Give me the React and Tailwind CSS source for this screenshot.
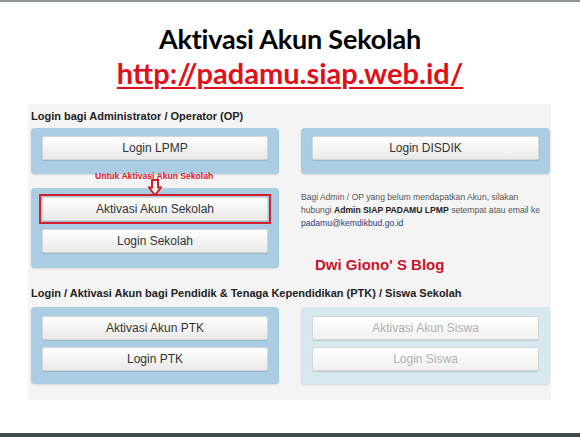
function Btn({ children, disabled }) {
  return (
    <div
      className={
        "h-[24px] flex items-center justify-center rounded-[2px] border border-[#d6d6d6] bg-gradient-to-b from-white to-[#e9e9e9] shadow-[0_1px_1px_rgba(0,0,0,0.12)] text-[12px] " +
        (disabled ? "text-[#b0b0b0] from-[#fafafa] to-[#f0f0f0]" : "text-[#333]")
      }
    >
      {children}
    </div>
  );
}

function Box({ children, light, className = "" }) {
  return (
    <div
      className={
        "rounded-[4px] px-[11px] shadow-[0_1px_2px_rgba(0,0,0,0.12)] " +
        (light ? "bg-[#d7e8f0] " : "bg-[#abcde3] ") +
        className
      }
    >
      {children}
    </div>
  );
}

export default function App() {
  return (
    <div
      className="w-[580px] h-[437px] bg-white border-t-2 border-[#8c9898] flex flex-col overflow-hidden"
      style={{ fontFamily: '"Liberation Sans", Arial, sans-serif' }}
    >
      <div className="flex flex-col items-center pt-[20px]">
        <h1 className="text-[27px] leading-[34px] font-bold text-black font-['Lato',sans-serif] tracking-[-0.2px]">
          Aktivasi Akun Sekolah
        </h1>
        <a
          href="#"
          className="text-[29px] leading-[34px] font-bold text-[#e0101a] underline decoration-[2px] underline-offset-[3px] font-['Lato',sans-serif]"
        >
          http://padamu.siap.web.id/
        </a>
      </div>

      <div className="ml-[28px] mt-[14px] w-[523px] h-[296px] bg-[#f4f4f4] px-[3px] flex flex-col">
        <div className="h-[24px] flex items-center text-[11px] font-bold text-[#222]">
          Login bagi Administrator / Operator (OP)
        </div>

        <div className="grid grid-cols-[248px_249px] gap-x-[22px]">
          <div className="flex flex-col">
            <Box className="pt-[8px] pb-[14px]">
              <Btn>Login LPMP</Btn>
            </Box>
            <div className="relative h-[14px]">
              <div className="absolute left-[64px] top-[-4px] text-[8.6px] font-bold text-[#d4202c] whitespace-nowrap">
                Untuk Aktivasi Akun Sekolah
              </div>
              <svg
                className="absolute left-[117px] top-[5px] z-10"
                width="14"
                height="17"
                viewBox="0 0 14 17"
              >
                <path
                  d="M4 1 H10 V8.5 H13 L7 16 L1 8.5 H4 Z"
                  fill="white"
                  stroke="#d4202c"
                  strokeWidth="2"
                />
              </svg>
            </div>
            <Box className="pt-[9px] pb-[15px] flex flex-col gap-[8px]">
              <div className="relative">
                <div className="absolute inset-[-3px_-3px] border-2 border-[#d4202c] pointer-events-none" />
                <Btn>Aktivasi Akun Sekolah</Btn>
              </div>
              <Btn>Login Sekolah</Btn>
            </Box>
          </div>

          <div className="flex flex-col">
            <Box className="pt-[8px] pb-[14px]">
              <Btn>Login DISDIK</Btn>
            </Box>
            <p className="mt-[17px] text-[8.6px] leading-[13px] text-[#555] whitespace-nowrap">
              Bagi Admin / OP yang belum mendapatkan Akun, silakan
              <br />
              hubungi <b className="text-[#222]">Admin SIAP PADAMU LPMP</b>{" "}
              setempat atau email ke
              <br />
              <span className="text-[#2a3f7a]">padamu@kemdikbud.go.id</span>
            </p>
            <div className="mt-[26px] ml-[14px] text-[15px] leading-[18px] font-bold text-[#c8142a]">
              Dwi Giono' S Blog
            </div>
          </div>
        </div>

        <div className="mt-[8px] h-[22px] flex items-center text-[11px] font-bold text-[#222]">
          Login / Aktivasi Akun bagi Pendidik &amp; Tenaga Kependidikan (PTK) / Siswa Sekolah
        </div>

        <div className="mt-[3px] grid grid-cols-[248px_249px] gap-x-[22px]">
          <Box className="pt-[9px] pb-[13px] flex flex-col gap-[7px]">
            <Btn>Aktivasi Akun PTK</Btn>
            <Btn>Login PTK</Btn>
          </Box>
          <Box light className="pt-[9px] pb-[13px] flex flex-col gap-[7px]">
            <Btn disabled>Aktivasi Akun Siswa</Btn>
            <Btn disabled>Login Siswa</Btn>
          </Box>
        </div>
      </div>

      <div className="mt-auto h-[4px] bg-[#3e4a4e]" />
    </div>
  );
}
